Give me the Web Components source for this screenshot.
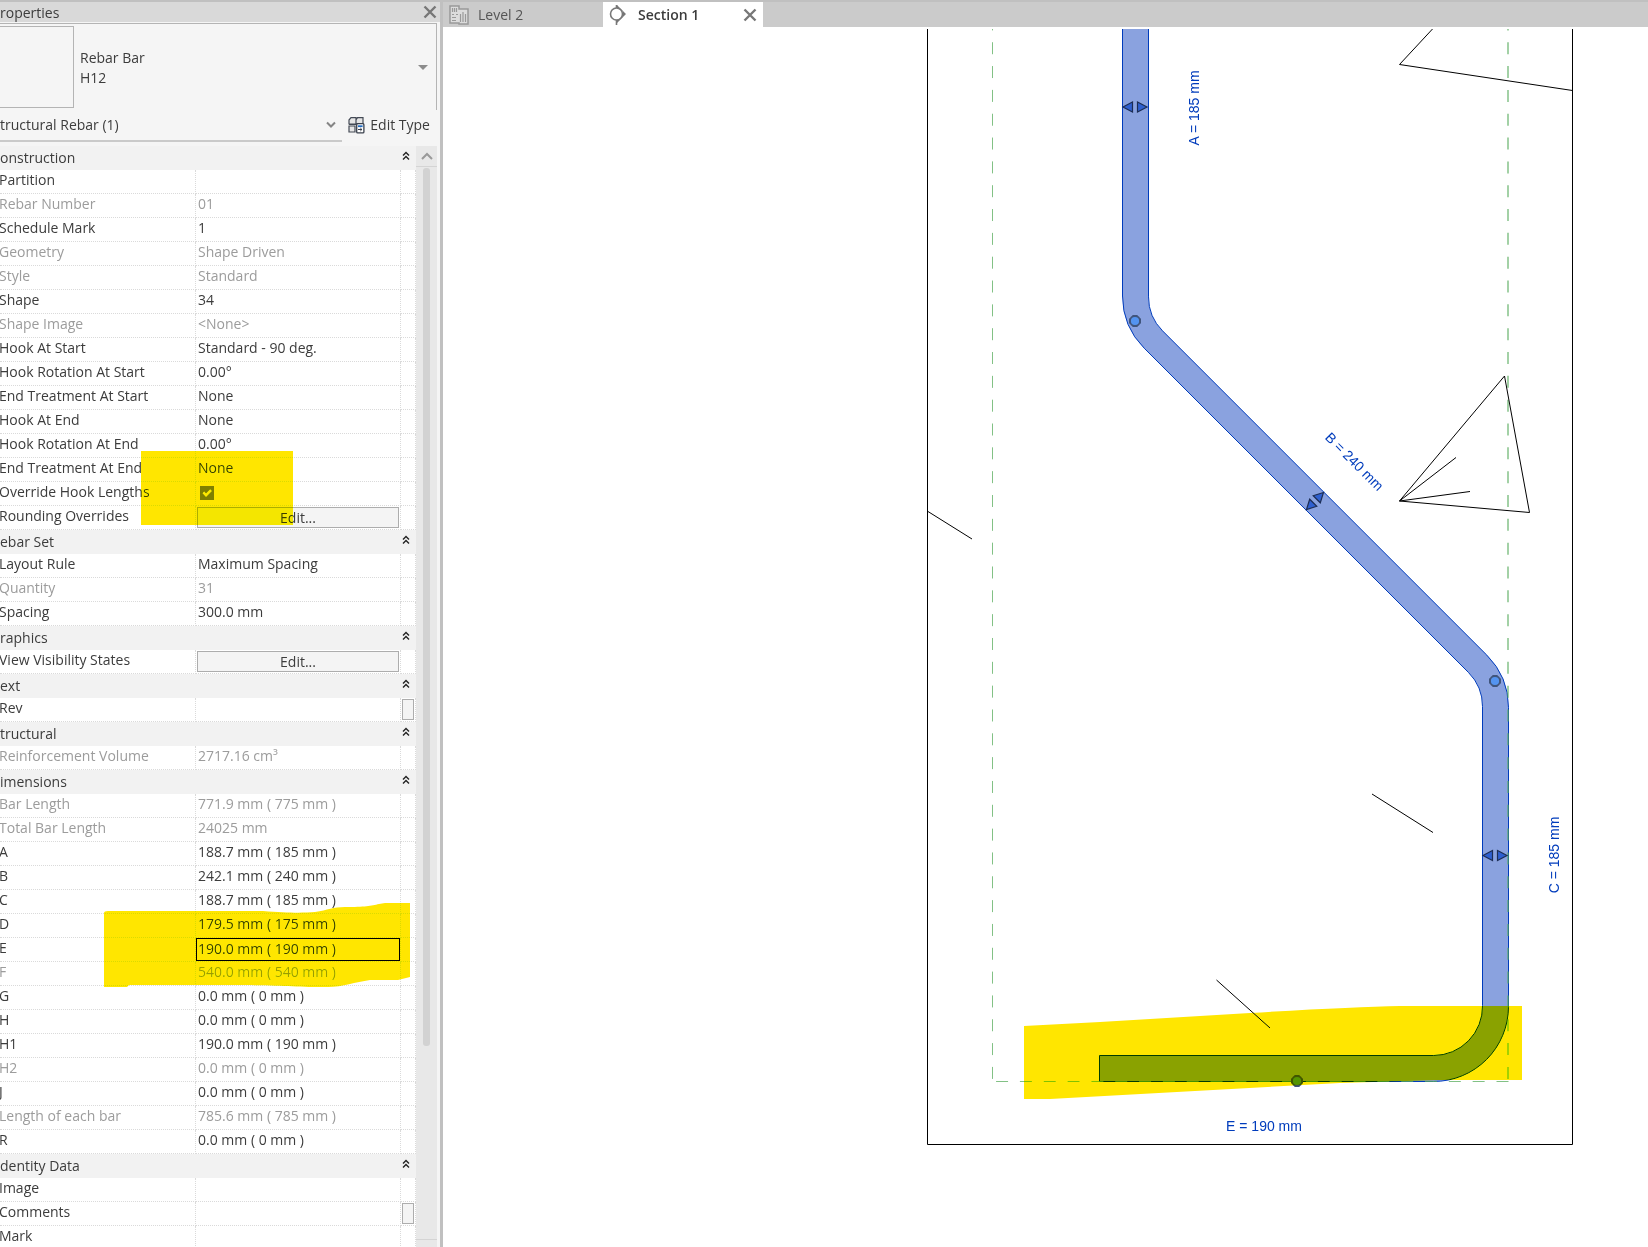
<!DOCTYPE html>
<html lang="en">
<head>
<meta charset="utf-8">
<title>Section 1</title>
<style>
  html, body { height: 100%; margin: 0; overflow: hidden; }
  body { font: 14px/20px "Open Sans", "Noto Sans", sans-serif; color: #3c3c3c; background: #fff; }
</style>
</head>
<body>
<app-window>
  <properties-panel slot="side"></properties-panel>
  <view-tabs slot="tabs">
    <view-tab icon="plan">Level 2</view-tab>
    <view-tab icon="section" active>Section 1</view-tab>
  </view-tabs>
  <drawing-view slot="view"></drawing-view>
</app-window>
<script>
const define = (name, html, setup) => {
  const t = document.createElement('template');
  t.innerHTML = html;
  customElements.define(name, class extends HTMLElement {
    constructor() {
      super();
      this.attachShadow({ mode: 'open' }).append(t.content.cloneNode(true));
    }
    connectedCallback() { if (setup) setup(this, this.shadowRoot); }
  });
};

/* Yellow marker stroke laid over other content */
define('marker-stroke', `
<style>
  :host { display: block; position: absolute; mix-blend-mode: darken; pointer-events: none; }
  svg { display: block; width: 100%; height: 100%; overflow: visible; }
  path { fill: #ffe600; }
</style>
<svg aria-hidden="true"><path/></svg>`, (el, root) => {
  root.querySelector('path').setAttribute('d', el.getAttribute('shape'));
});

/* Icons */
const ICONS = {
  close: '<svg width="14" height="14" viewBox="0 0 14 14"><path d="M1.5 1.5l11 11M12.5 1.5l-11 11" fill="none" stroke="#777" stroke-width="2.4"/></svg>',
  plan: '<svg width="20" height="20" viewBox="0 0 20 20"><path d="M1 1h9v3h9v15h-9v-1H1z" fill="#dcdcdc" stroke="#999" stroke-width="1.5"/><path d="M3.500 3v4M5.500 3v4M7.500 3v4M3 9.500h2M7 9.500h2M3 12.500h4M3 15.500h4M11.500 9v8M14 7v10M16.500 9v8" stroke="#999" stroke-width="1.200" fill="none"/></svg>',
  section: '<svg width="18" height="20" viewBox="0 0 18 20"><path d="M8 0l9 9-9 9V15a6 6 0 0 0 0-12z" fill="#777"/><circle cx="7.500" cy="9" r="6" fill="#fff" stroke="#777" stroke-width="1.600"/><path d="M7.500 0v3M7.500 15v5" stroke="#777" stroke-width="1.600"/></svg>',
  edit: '<svg width="17" height="17" viewBox="0 0 17 17"><path d="M1 3l2-2.300h5V7H1zM8 3l1.500-2.300H15V7H8zM1 9h6v6H1z" fill="#e6e6e6" stroke="#444a55" stroke-width="1.200"/><path d="M1 7.500h7M8 7h7" stroke="#444a55"/><rect x="8.700" y="6.700" width="7.200" height="9.200" rx="1" fill="#fff" stroke="#3a404c" stroke-width="1.300"/><path d="M10 9.200h4.600" stroke="#1f6ac0" stroke-width="1.800"/><path d="M10 12.500h4M12.300 11l1.600 1.500-1.600 1.500" stroke="#3a404c" fill="none"/></svg>'
};

define('view-tab', `
<style>
  :host { display: flex; flex: 0 0 160px; align-items: center; box-sizing: border-box; padding: 0 6px; gap: 9px; color: #555; }
  :host([active]) { background: #fff; color: #3c3c3c; font-weight: 600; gap: 11px; }
  .name { flex: 1; }
  .icon, button { display: flex; }
  button { border: 0; padding: 0; background: none; display: none; }
  :host([active]) button { display: flex; }
</style>
<span class="icon" aria-hidden="true"></span><span class="name"><slot></slot></span>
<button type="button" aria-label="Close view">${ICONS.close}</button>`, (el, root) => {
  root.querySelector('.icon').innerHTML = ICONS[el.getAttribute('icon')];
});

define('view-tabs', `
<style>:host { display: flex; flex: 0 0 25px; background: #cbcbcb; }</style><slot></slot>`);

define('app-window', `
<style>
  :host { display: flex; box-sizing: border-box; height: 100vh; border-top: 2px solid #c0c0c0; overflow: hidden; }
  main { flex: 1; min-width: 0; display: flex; flex-direction: column; }
</style>
<slot name="side"></slot><main><slot name="tabs"></slot><slot name="view"></slot></main>`);

/* Table of instance properties */
const G = (title, rows) => ({ title, rows });
const R = (name, value = '', opt = {}) => ({ name, value, ...opt });
const off = { off: true };
const GROUPS = [
  G('onstruction', [
    R('Partition'), R('Rebar Number', '01', off), R('Schedule Mark', '1'),
    R('Geometry', 'Shape Driven', off), R('Style', 'Standard', off), R('Shape', '34'),
    R('Shape Image', '&lt;None&gt;', off), R('Hook At Start', 'Standard - 90 deg.'),
    R('Hook Rotation At Start', '0.00°'), R('End Treatment At Start', 'None'),
    R('Hook At End', 'None'), R('Hook Rotation At End', '0.00°'),
    R('End Treatment At End', 'None'), R('Override Hook Lengths', '', { kind: 'check' }),
    R('Rounding Overrides', '', { kind: 'edit' })]),
  G('ebar Set', [R('Layout Rule', 'Maximum Spacing'), R('Quantity', '31', off), R('Spacing', '300.0 mm')]),
  G('raphics', [R('View Visibility States', '', { kind: 'edit' })]),
  G('ext', [R('Rev', '', { more: true })]),
  G('tructural', [R('Reinforcement Volume', '2717.16 cm³', off)]),
  G('imensions', [
    R('Bar Length', '771.9 mm ( 775 mm )', off), R('Total Bar Length', '24025 mm', off),
    R('A', '188.7 mm ( 185 mm )'), R('B', '242.1 mm ( 240 mm )'), R('C', '188.7 mm ( 185 mm )'),
    R('D', '179.5 mm ( 175 mm )'), R('E', '190.0 mm ( 190 mm )', { kind: 'text' }),
    R('F', '540.0 mm ( 540 mm )', off), R('G', '0.0 mm ( 0 mm )'), R('H', '0.0 mm ( 0 mm )'),
    R('H1', '190.0 mm ( 190 mm )'), R('H2', '0.0 mm ( 0 mm )', off), R('J', '0.0 mm ( 0 mm )'),
    R('Length of each bar', '785.6 mm ( 785 mm )', off), R('R', '0.0 mm ( 0 mm )')]),
  G('dentity Data', [R('Image'), R('Comments', '', { more: true }), R('Mark')])
];

define('property-grid', `
<style>
  :host { display: block; position: relative; flex: 1; min-width: 0; background: #fff; }
  table { width: 100%; table-layout: fixed; border-spacing: 0; }
  col.name { width: 196px; } col.more { width: 15px; }
  th, td { box-sizing: border-box; height: 24px; padding: 0; font-weight: 400; text-align: left; white-space: nowrap; line-height: 20px; }
  .row > * { border-bottom: 1px dotted #dadada; border-right: 1px dotted #dadada; vertical-align: top; }
  .row th { text-indent: -1px; }
  .row td { padding-left: 2px; }
  .row .more { padding: 1px 0 0 1px; }
  .off { color: #9c9c9c; }
  .group th { background: #f2f2f2; }
  .group div { display: flex; justify-content: space-between; padding-right: 6px; }
  .group button { border: 0; background: none; padding: 0; display: flex; align-items: center; height: 15px; }
  .edit, .dots { box-sizing: border-box; display: block; height: 21px; padding: 0; border: 1px solid #adadad; background: #f4f4f4; font: inherit; line-height: 18px; color: inherit; }
  .row td.wide { padding: 1px 1px 0; }
  .edit { width: 100%; }
  .dots { width: 12px; }
  .row td.field { padding: 0; }
  input[type=text] { box-sizing: border-box; display: block; width: 100%; height: 23px; margin: 0; border: 1px solid #000; padding: 0 1px 2px; font: inherit; color: inherit; background: none; outline: 0; }
  input[type=checkbox] { appearance: none; display: block; width: 14px; height: 14px; margin: 4px 2px 0; background: #7f7f7f; }
  input[type=checkbox]::before { content: ""; display: block; width: 14px; height: 14px; background: #fff; clip-path: polygon(18% 52%, 30% 40%, 43% 54%, 73% 24%, 85% 36%, 43% 78%); }
  .one { left: 141px; top: 305px; width: 152px; height: 74px; }
  .two { left: 103px; top: 757px; width: 307px; height: 84px; }
</style>
<table aria-label="Properties"><colgroup><col class="name"><col><col class="more"></colgroup></table>
<marker-stroke class="one" shape="M0 0H152V74H0Z"></marker-stroke>
<marker-stroke class="two" shape="M1 10Q1 8 5 8H160C185 10 200 10 212 9C225 7 230 4 242 4C262 4 268 3 276 1L282 0H307V74L295 77H267C252 79 240 84 225 84C190 84 180 82 130 82H26L24 84H1Z"></marker-stroke>`,
(el, root) => {
  const value = (r, id) => {
    if (r.kind === 'edit') return `<td class="wide"><button type="button" class="edit" id="${id}">Edit...</button></td>`;
    if (r.kind === 'check') return `<td><input type="checkbox" checked id="${id}"></td>`;
    if (r.kind === 'text') return `<td class="field"><input type="text" value="${r.value}" id="${id}"></td>`;
    return `<td class="${r.off ? 'off' : ''}">${r.value}</td>`;
  };
  root.querySelector('table').insertAdjacentHTML('beforeend', GROUPS.map((g, i) => `
    <tbody><tr class="group"><th colspan="3" scope="rowgroup"><div>${g.title}<button type="button" aria-label="Collapse">
    <svg width="8" height="10" viewBox="0 0 8 10"><path d="M1 4.500L4 1.500l3 3M1 8.500L4 5.500l3 3" fill="none" stroke="#222" stroke-width="1.400"/></svg></button></div></th></tr>
    ${g.rows.map((r, j) => `<tr class="row"><th scope="row" class="${r.off ? 'off' : ''}">${r.kind ? `<label for="p${i}-${j}">${r.name}</label>` : r.name}</th>${value(r, `p${i}-${j}`)}<td class="more">${r.more ? '<button type="button" class="dots" aria-label="Browse"></button>' : ''}</td></tr>`).join('')}</tbody>`).join(''));
});

define('panel-scrollbar', `
<style>
  :host { flex: 0 0 21px; display: flex; flex-direction: column; align-items: center; background: #e8e8e8; }
  .up, .down { align-self: stretch; display: flex; align-items: center; justify-content: center; box-sizing: border-box; }
  .up { height: 21px; border-bottom: 1px solid #d4d4d4; }
  .down { height: 8px; border-top: 1px solid #d4d4d4; }
  .track { flex: 1; padding-top: 1px; }
  .thumb { width: 7px; height: 82%; border-radius: 3px; background: #d2d2d2; }
</style>
<div class="up"><svg width="12" height="8" viewBox="0 0 12 8"><path d="M1 7l5-5 5 5" fill="none" stroke="#999" stroke-width="2"/></svg></div>
<div class="track"><div class="thumb"></div></div><div class="down"></div>`);

define('properties-panel', `
<style>
  :host { flex: 0 0 443px; box-sizing: border-box; display: flex; flex-direction: column; min-height: 0; border-right: 3px solid #c0c0c0; background: #f5f5f5; overflow: hidden; }
  button { font: inherit; color: inherit; border: 0; background: none; padding: 0; text-align: left; }
  header { display: flex; align-items: center; justify-content: space-between; height: 20px; flex: none; padding-right: 3px; background: #d9d9d9; }
  h1 { margin: 0; padding-top: 2px; font: inherit; }
  header button { display: flex; }
  .type { flex: none; display: flex; align-items: center; gap: 6px; height: 87px; margin: 1px 3px 0 0; border: solid #b4b4b4; border-width: 1px 1px 0 0; box-sizing: border-box; padding-right: 8px; }
  .thumb { box-sizing: border-box; width: 74px; height: 82px; border: 1px solid #b4b4b4; border-left: 0; }
  .type .text { flex: 1; padding-top: 2px; }
  .type .text span { display: block; }
  .filter { flex: none; display: flex; height: 36px; padding-right: 10px; gap: 6px; align-items: flex-start; }
  .pick { flex: 1; display: grid; border-bottom: 2px solid #cacaca; }
  .pick > * { grid-area: 1 / 1; }
  .pick svg { justify-self: end; align-self: center; margin-right: 6px; pointer-events: none; }
  select { appearance: none; width: 100%; height: 30px; border: 0; padding: 0; margin: 0; background: none; font: inherit; color: inherit; }
  .edit { display: flex; align-items: center; gap: 5px; height: 30px; }
  .body { display: flex; flex: 1; min-height: 0; margin-right: 3px; overflow: hidden; }
</style>
<header><h1>roperties</h1><button type="button" aria-label="Close">${ICONS.close}</button></header>
<button type="button" class="type"><span class="thumb"></span><span class="text"><span>Rebar Bar</span><span>H12</span></span>
<svg width="10" height="5" viewBox="0 0 10 5"><path d="M0 0h10L5 5z" fill="#8c8c8c"/></svg></button>
<div class="filter"><div class="pick"><select aria-label="Category"><option>tructural Rebar (1)</option></select>
<svg width="10" height="8" viewBox="0 0 10 8"><path d="M1 1.500l4 4 4-4" fill="none" stroke="#858585" stroke-width="2"/></svg></div>
<button type="button" class="edit">${ICONS.edit}<span>Edit Type</span></button></div>
<div class="body"><property-grid></property-grid><panel-scrollbar></panel-scrollbar></div>`);

/* Section view: coordinates are those of the window */
define('drawing-view', `
<style>
  :host { display: block; flex: 1; min-height: 0; position: relative; isolation: isolate; background: #fff; overflow: hidden; }
  svg { display: block; width: 100%; height: 100%; }
  .ink { fill: none; stroke: #000; }
  .cover { fill: none; stroke: #58ac5c; stroke-opacity: .75; stroke-dasharray: 12 11.830; }
  .cover.soft { stroke-width: 2; stroke-opacity: .55; }
  .bar { fill: #8aa2df; stroke: #003cbc; }
  .dim { font: 14px "Liberation Sans", Arial, sans-serif; fill: #003cbc; text-anchor: middle; }
  .grip path { fill: #2f60d0; stroke: #1c2d55; stroke-width: 1.200; }
  .node { fill: #5494f0; stroke: #40557c; stroke-width: 1.800; }
  .marker { fill: #ffe600; mix-blend-mode: darken; }
</style>
<svg role="img" aria-label="Rebar section">
  <defs><g id="grip" class="grip"><path d="M-12 0L-2.500-5V5z"/><path d="M12 0L2.500-5V5z"/></g>
  <g id="node"><circle r="5" class="node"/><path d="M-2.500-5.500h5M-2.500 5.500h5M-5.500-2.500v5M5.500-2.500v5" stroke="#40557c" fill="none"/></g></defs>
  <g transform="translate(-443 -27)">
    <path class="bar" d="M1122.500 29V296A74 74 0 0 0 1144.200 348.200L1468.500 672.500A48 48 0 0 1 1482.500 706.500V1005.500A49 49 0 0 1 1433.500 1055.500H1099.500V1081.500H1433.500A75 75 0 0 0 1508.500 1006.500V707.400A74 74 0 0 0 1486.800 655.100L1162.500 330.800A48 48 0 0 1 1148.500 296.900V29" />
    <path class="cover" stroke-dashoffset="10.600" d="M992.500 29V1081"/>
    <path class="cover soft" stroke-dashoffset="10.600" d="M1508 29V1081"/>
    <path class="cover" d="M1508.500 1081.500H992.500"/>
    <path class="ink" d="M927.500 29V1144.500H1572.500V29"/>
    <path class="ink" d="M1432.500 29L1399.500 64.500L1572.500 90.500M1399.500 501L1504.500 376L1529.500 512.500ZL1456 457.500M1399.500 501L1470 491.500M928 511.500L972 539M1372 794L1433 832.500M1216.500 980L1270 1028"/>
    <use href="#grip" x="1135" y="107"/>
    <use href="#grip" transform="translate(1315 501) rotate(-45)"/>
    <use href="#grip" x="1495" y="855.500"/>
    <use href="#node" x="1135" y="321"/>
    <use href="#node" x="1495" y="681"/>
    <use href="#node" x="1297" y="1081"/>
    <text class="dim" transform="translate(1199 108) rotate(-90)">A = 185 mm</text>
    <text class="dim" transform="translate(1351 465) rotate(45)">B = 240 mm</text>
    <text class="dim" transform="translate(1559 855) rotate(-90)">C = 185 mm</text>
    <text class="dim" x="1264" y="1131">E = 190 mm</text>
    <path class="marker" d="M1024 1026L1100 1022L1250 1013Q1350 1007 1400 1006H1522V1080H1440L1340 1083L1050 1099H1024Z"/>
  </g>
</svg>`);
</script>
</body>
</html>
